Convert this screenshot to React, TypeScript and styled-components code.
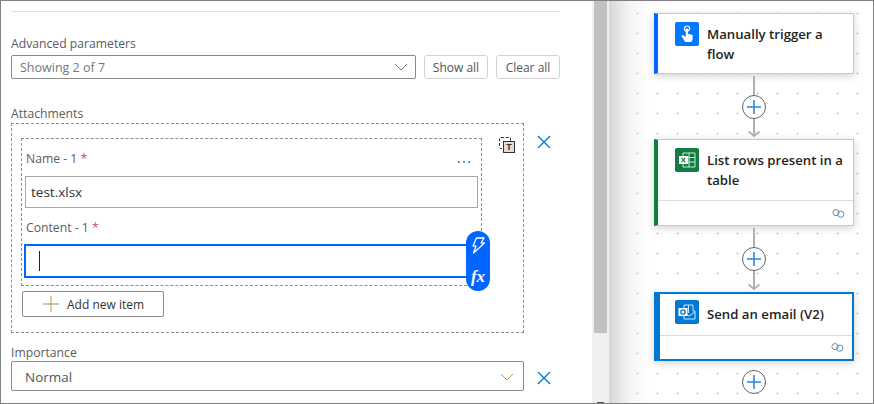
import React from "react";
import styled, { createGlobalStyle } from "styled-components";

const Global = createGlobalStyle`
  html, body { margin: 0; padding: 0; background: #fff; }
  * { box-sizing: border-box; }
`;

const Frame = styled.div`
  width: 874px;
  height: 404px;
  border: 1px solid #808080;
  display: flex;
  overflow: hidden;
  font-family: "Open Sans", "Liberation Sans", sans-serif;
  color: #333;
`;

const Panel = styled.section`
  width: 591px;
  flex: none;
  padding: 10px 0 0 10px;
  background: #fff;
`;

const Divider = styled.div`
  width: 549px;
  height: 1px;
  background: #e1e1e1;
`;

const Label = styled.div<{ $top: number }>`
  margin-top: ${(p) => p.$top}px;
  height: 16px;
  font-size: 12.2px;
  line-height: 16px;
  color: #5c5c5c;
`;

const FilterRow = styled.div`
  display: flex;
  margin-top: 3px;
  height: 24px;
`;

const FilterSelect = styled.div`
  width: 405px;
  display: flex;
  align-items: center;
  justify-content: space-between;
  padding: 0 7px 0 8px;
  border: 1px solid #8a8a8a;
  border-radius: 2px;
  font-size: 12.5px;
  color: #777;
`;

const GhostButton = styled.button`
  width: 64px;
  margin-left: 8px;
  padding: 0;
  background: #fff;
  border: 1px solid #d2d2d2;
  border-radius: 3px;
  font: 12px "Open Sans", sans-serif;
  color: #555;
`;

const AttachmentRow = styled.div`
  display: flex;
  margin-top: 1px;
`;

const OuterBox = styled.div`
  width: 513px;
  height: 210px;
  padding: 14px 0 0 9px;
  border: 1px dashed #8f8f8f;
`;

const ItemRow = styled.div`
  display: flex;
  align-items: flex-start;
`;

const ItemBox = styled.div`
  position: relative;
  width: 461px;
  height: 148px;
  padding: 0 3px;
  border: 1px dashed #8f8f8f;
`;

const ItemLabelRow = styled.div<{ $top: number }>`
  display: flex;
  justify-content: space-between;
  align-items: center;
  height: 16px;
  margin-top: ${(p) => p.$top}px;
  padding-left: 1px;
  font-size: 12.2px;
  line-height: 16px;
  color: #5c5c5c;
`;

const Req = styled.span`
  color: #c4556a;
`;

const Dots = styled.div`
  display: flex;
  gap: 3px;
  margin: 5px 8px 0 0;
`;

const Dot = styled.i`
  display: block;
  width: 2px;
  height: 2px;
  background: #4a9fe0;
`;

const TextBox = styled.div<{ $top: number }>`
  width: 453px;
  height: 32px;
  margin-top: ${(p) => p.$top}px;
  padding-left: 5px;
  border: 1px solid #a6a6a6;
  font-size: 13.5px;
  line-height: 30px;
  color: #333;
`;

const FocusBox = styled.div`
  width: 446px;
  height: 34px;
  margin: 8px 0 0 -1px;
  padding: 5px 0 0 13px;
  border: 2px solid #0066ff;
`;

const Caret = styled.div`
  width: 1px;
  height: 20px;
  background: #222;
`;

const TokenPill = styled.div`
  position: absolute;
  left: 444px;
  top: 92px;
  width: 24px;
  height: 60px;
  border-radius: 12px;
  background: #0066ff;
  display: flex;
  flex-direction: column;
  align-items: center;
  justify-content: space-between;
  padding: 6px 0 4px;
  color: #fff;
`;

const FxText = styled.span`
  font: italic bold 17px/20px "Liberation Serif", serif;
  color: #fff;
`;

const TypeIcon = styled.div`
  position: relative;
  width: 16px;
  height: 16px;
  margin: -1px 0 0 17px;
`;

const DashedSquare = styled.div`
  width: 12px;
  height: 12px;
  border: 1px dashed #333;
  border-radius: 2px;
`;

const TypeSquare = styled.div`
  position: absolute;
  right: 0;
  bottom: 0;
  width: 12px;
  height: 12px;
  border: 1px solid #333;
  background: #ddd;
  font: bold 9px/10px "Liberation Sans", sans-serif;
  text-align: center;
  color: #333;
`;

const AddButton = styled.button`
  display: flex;
  align-items: center;
  width: 142px;
  height: 26px;
  margin: 5px 0 0 1px;
  padding: 0 0 0 20px;
  background: #fff;
  border: 1px solid #8a8a8a;
  border-radius: 2px;
  font: 12px "Open Sans", sans-serif;
  color: #333;
  gap: 8px;
`;

const RemoveButton = styled.div<{ $top: number }>`
  width: 14px;
  height: 14px;
  margin: ${(p) => p.$top}px 0 0 13px;
  flex: none;
`;

const ImportanceRow = styled.div`
  display: flex;
`;

const ImportanceSelect = styled.div`
  width: 513px;
  height: 30px;
  display: flex;
  align-items: center;
  justify-content: space-between;
  padding: 1px 9px 0 13px;
  border: 1px solid #8a8a8a;
  border-radius: 2px;
  font-size: 13.5px;
  color: #555;
`;

const ScrollTrack = styled.div`
  position: relative;
  width: 17px;
  flex: none;
  background: #f0f0f0;
  padding: 0 2px 0 2px;
`;

const ScrollThumb = styled.div`
  height: 332px;
  width: 13px;
  background: #c1c1c1;
`;

const ScrollNub = styled.div`
  position: absolute;
  left: 5px;
  bottom: 0;
  width: 7px;
  height: 1px;
  background: #555;
`;

const Canvas = styled.section`
  flex: 1;
  display: flex;
  flex-direction: column;
  align-items: flex-start;
  padding: 12px 0 0 45px;
  background-color: #fff;
  background-image: radial-gradient(circle at 8.5px 12.5px, #dcdcdc 1px, transparent 1.3px),
    linear-gradient(to right, #d6d6d6, #f4f4f4 20px, #fff 42px);
  background-size: 20px 20px, 100% 100%;
`;

const Card = styled.div<{ $accent: string; $selected?: boolean }>`
  width: 200px;
  flex: none;
  background: #fff;
  border: ${(p) => (p.$selected ? `2px solid ${p.$accent}` : "1px solid #c8c8c8")};
  border-left: ${(p) => (p.$selected ? 6 : 4)}px solid ${(p) => p.$accent};
  box-shadow: 0 2px 8px rgba(0, 0, 0, 0.18);
`;

const CardHead = styled.div<{ $height: number; $selected?: boolean }>`
  height: ${(p) => p.$height}px;
  display: flex;
  align-items: flex-start;
  gap: 8px;
  padding: ${(p) => (p.$selected ? "6px 0 0 15px" : "8px 0 0 17px")};
`;

const CardIcon = styled.div<{ $bg: string }>`
  width: 24px;
  height: 24px;
  flex: none;
  border-radius: 2px;
  background: ${(p) => p.$bg};
  display: flex;
  align-items: center;
  justify-content: center;
`;

const CardTitle = styled.div<{ $top?: number }>`
  margin-top: ${(p) => p.$top ?? 2}px;
  font-size: 13.2px;
  font-weight: 600;
  line-height: 20px;
  color: #242424;
`;

const CardFoot = styled.div<{ $height: number }>`
  height: ${(p) => p.$height}px;
  display: flex;
  align-items: center;
  justify-content: flex-end;
  padding-right: 8px;
  border-top: 1px solid #dcdcdc;
`;

const Connector = styled.div<{ $height: number }>`
  width: 200px;
  height: ${(p) => p.$height}px;
  flex: none;
  display: flex;
  flex-direction: column;
  align-items: center;
  padding: 2px 0;
`;

const Wire = styled.div<{ $height?: number }>`
  width: 2px;
  background: #b0b0b0;
  flex: ${(p) => (p.$height ? `0 0 ${p.$height}px` : "1")};
`;

const ArrowTip = styled.svg`
  margin-top: -5px;
  flex: none;
`;

const AddCircle = styled.div<{ $top?: number }>`
  width: 24px;
  height: 24px;
  flex: none;
  margin-top: ${(p) => p.$top ?? 0}px;
  border: 1px solid #606060;
  border-radius: 50%;
  background: #fff;
  display: flex;
  align-items: center;
  justify-content: center;
`;

const EndCircle = styled(AddCircle)`
  margin-left: 88px;
`;

const Chevron = ({ color }: { color: string }) => (
  <svg width="14" height="8" viewBox="0 0 14 8" fill="none">
    <path d="M1 1l6 6 6-6" stroke={color} strokeWidth="1" />
  </svg>
);

const CloseIcon = () => (
  <svg width="14" height="14" viewBox="0 0 14 14" fill="none">
    <path d="M1 1l12 12M13 1L1 13" stroke="#0078d4" strokeWidth="1.3" />
  </svg>
);

const PlusIcon = () => (
  <svg width="14" height="14" viewBox="0 0 14 14" fill="none">
    <path d="M0 7h14M7 0v14" stroke="#2b88d8" strokeWidth="1.6" />
  </svg>
);

const AddItemIcon = () => (
  <svg width="16" height="16" viewBox="0 0 16 16" fill="none">
    <path d="M0 8h16" stroke="#8a8a8a" strokeWidth="1" />
    <path d="M8 0v16" stroke="#c9964a" strokeWidth="1" />
  </svg>
);

const BoltIcon = () => (
  <svg width="15" height="17" viewBox="0 0 15 17" fill="none">
    <path d="M5.500 1h7.500L10 6h3.500L2.500 16l2.500-7H2z" stroke="#fff" strokeWidth="1.300" strokeLinejoin="round" />
  </svg>
);

const LinkIcon = () => (
  <svg width="13" height="9" viewBox="0 0 13 9" fill="none">
    <circle cx="4" cy="3.600" r="3.100" stroke="#8a8a8a" />
    <circle cx="8.800" cy="5.200" r="3.100" stroke="#5a8fc4" />
  </svg>
);

const TouchIcon = () => (
  <svg width="16" height="18" viewBox="0 0 16 18">
    <circle cx="8" cy="3.600" r="2.600" fill="none" stroke="#fff" strokeWidth="1.200" />
    <path d="M6.800 3.600h2.200v5.200l4.600 1.200v4.800l-1.400 2.200H6.200L2.400 11l1.200-1 3.200 1.800z" fill="#fff" />
  </svg>
);

const ExcelIcon = () => (
  <svg width="18" height="16" viewBox="0 0 18 16">
    <path d="M5 1h12v14H5z" fill="none" stroke="#cfe8da" strokeWidth="1" />
    <path d="M11 1v14M5 5.500h12M5 10h12" stroke="#cfe8da" strokeWidth="1" />
    <rect x="1" y="4" width="9" height="8" fill="#fff" />
    <path d="M3.600 5.800l3.600 4.400M7.200 5.800l-3.600 4.400" stroke="#107c41" strokeWidth="1.100" />
  </svg>
);

const OutlookIcon = () => (
  <svg width="18" height="16" viewBox="0 0 18 16">
    <path d="M6 1h9v6h2v8H6z" fill="none" stroke="#cde4f7" strokeWidth="1" />
    <path d="M10.500 1v8M6 9l5 3 6-4" fill="none" stroke="#cde4f7" strokeWidth="1" />
    <rect x="0.500" y="4" width="9" height="8" fill="#fff" />
    <circle cx="5" cy="8" r="2.200" fill="none" stroke="#0078d4" strokeWidth="1.300" />
  </svg>
);

const Arrow = () => (
  <ArrowTip width="12" height="6" viewBox="0 0 12 6" fill="none">
    <path d="M0.500 0.500L6 5l5.500-4.500" stroke="#b0b0b0" strokeWidth="1.800" />
  </ArrowTip>
);

const App = () => {
  return (
    <>
      <Global />
      <Frame>
        <Panel>
          <Divider />
          <Label $top={24}>Advanced parameters</Label>
          <FilterRow>
            <FilterSelect>
              Showing 2 of 7
              <Chevron color="#777" />
            </FilterSelect>
            <GhostButton>Show all</GhostButton>
            <GhostButton>Clear all</GhostButton>
          </FilterRow>

          <Label $top={27}>Attachments</Label>
          <AttachmentRow>
            <OuterBox>
              <ItemRow>
                <ItemBox>
                  <ItemLabelRow $top={12}>
                    <span>
                      Name - 1 <Req>*</Req>
                    </span>
                    <Dots>
                      <Dot />
                      <Dot />
                      <Dot />
                    </Dots>
                  </ItemLabelRow>
                  <TextBox $top={9}>test.xlsx</TextBox>
                  <ItemLabelRow $top={12}>
                    <span>
                      Content - 1 <Req>*</Req>
                    </span>
                  </ItemLabelRow>
                  <FocusBox>
                    <Caret />
                  </FocusBox>
                  <TokenPill>
                    <BoltIcon />
                    <FxText>fx</FxText>
                  </TokenPill>
                </ItemBox>
                <TypeIcon>
                  <DashedSquare />
                  <TypeSquare>T</TypeSquare>
                </TypeIcon>
              </ItemRow>
              <AddButton>
                <AddItemIcon />
                Add new item
              </AddButton>
            </OuterBox>
            <RemoveButton $top={9}>
              <CloseIcon />
            </RemoveButton>
          </AttachmentRow>

          <Label $top={12}>Importance</Label>
          <ImportanceRow>
            <ImportanceSelect>
              Normal
              <Chevron color="#c9964a" />
            </ImportanceSelect>
            <RemoveButton $top={7}>
              <CloseIcon />
            </RemoveButton>
          </ImportanceRow>
        </Panel>

        <ScrollTrack>
          <ScrollThumb />
          <ScrollNub />
        </ScrollTrack>

        <Canvas>
          <Card $accent="#0066ff">
            <CardHead $height={59}>
              <CardIcon $bg="#0078ff">
                <TouchIcon />
              </CardIcon>
              <CardTitle>Manually trigger a flow</CardTitle>
            </CardHead>
          </Card>
          <Connector $height={65}>
            <Wire $height={19} />
            <AddCircle>
              <PlusIcon />
            </AddCircle>
            <Wire />
            <Arrow />
          </Connector>

          <Card $accent="#107c41">
            <CardHead $height={60}>
              <CardIcon $bg="#107c41">
                <ExcelIcon />
              </CardIcon>
              <CardTitle>List rows present in a table</CardTitle>
            </CardHead>
            <CardFoot $height={25}>
              <LinkIcon />
            </CardFoot>
          </Card>
          <Connector $height={66}>
            <Wire $height={19} />
            <AddCircle>
              <PlusIcon />
            </AddCircle>
            <Wire />
            <Arrow />
          </Connector>

          <Card $accent="#0078d4" $selected>
            <CardHead $height={41} $selected>
              <CardIcon $bg="#0078d4">
                <OutlookIcon />
              </CardIcon>
              <CardTitle $top={4}>Send an email (V2)</CardTitle>
            </CardHead>
            <CardFoot $height={24}>
              <LinkIcon />
            </CardFoot>
          </Card>
          <EndCircle $top={9}>
            <PlusIcon />
          </EndCircle>
        </Canvas>
      </Frame>
    </>
  );
};

export default App;
